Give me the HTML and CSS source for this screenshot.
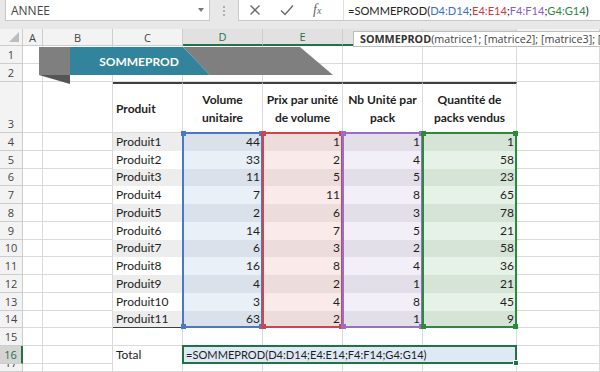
FILE: index.html
```html
<!DOCTYPE html>
<html lang="fr">
<head>
    <meta charset="UTF-8">
    <title>SOMMEPROD</title>
    <link rel="stylesheet" href="styles.css">
</head>
<body>
    <div class="formula-bar">
        <div class="name-box"><span>ANNEE</span><span class="caret"></span></div>
        <div class="grip"><i></i><i></i><i></i></div>
        <div class="fx-area">
            <div class="fx-buttons">
                <svg width="12" height="12" viewBox="0 0 12 12"><path d="M1.5 1.5l9 9M10.5 1.5l-9 9"/></svg>
                <svg width="14" height="12" viewBox="0 0 14 12"><path d="M1 6.5l4 4L13 1.5"/></svg>
                <span class="fx">f<small>x</small></span>
            </div>
            <div class="formula">=SOMMEPROD(<span class="ref-d">D4:D14</span>;<span class="ref-e">E4:E14</span>;<span class="ref-f">F4:F14</span>;<span class="ref-g">G4:G14</span>)</div>
        </div>
    </div>

    <div class="sheet">
        <div class="row">
            <div class="h corner"></div>
            <div class="h">A</div>
            <div class="h">B</div>
            <div class="h">C</div>
            <div class="h sel">D</div>
            <div class="h sel">E</div>
            <div class="h sel">F</div>
            <div class="h sel">G</div>
            <div class="h">H</div>
        </div>
        <div class="row">
            <div class="h rh">1</div>
            <div></div><div></div><div></div><div></div><div></div><div></div><div></div><div></div>
        </div>
        <div class="row">
            <div class="h rh">2</div>
            <div></div><div></div><div></div><div></div><div></div><div></div><div></div><div></div>
        </div>
        <div class="row">
            <div class="h rh">3</div>
            <div></div><div></div>
            <div class="th left">Produit</div>
            <div class="th">Volume<br>unitaire</div>
            <div class="th">Prix par unité<br>de volume</div>
            <div class="th">Nb Unité par<br>pack</div>
            <div class="th">Quantité de<br>packs vendus</div>
            <div></div>
        </div>

        <div class="row band">
            <div class="h rh">4</div><div></div><div></div>
            <div class="cp">Produit1</div>
            <div class="d num">44</div><div class="e num">1</div><div class="f num">1</div><div class="g num">1</div><div></div>
        </div>
        <div class="row">
            <div class="h rh">5</div><div></div><div></div>
            <div class="cp">Produit2</div>
            <div class="d num">33</div><div class="e num">2</div><div class="f num">4</div><div class="g num">58</div><div></div>
        </div>
        <div class="row band">
            <div class="h rh">6</div><div></div><div></div>
            <div class="cp">Produit3</div>
            <div class="d num">11</div><div class="e num">5</div><div class="f num">5</div><div class="g num">23</div><div></div>
        </div>
        <div class="row">
            <div class="h rh">7</div><div></div><div></div>
            <div class="cp">Produit4</div>
            <div class="d num">7</div><div class="e num">11</div><div class="f num">8</div><div class="g num">65</div><div></div>
        </div>
        <div class="row band">
            <div class="h rh">8</div><div></div><div></div>
            <div class="cp">Produit5</div>
            <div class="d num">2</div><div class="e num">6</div><div class="f num">3</div><div class="g num">78</div><div></div>
        </div>
        <div class="row">
            <div class="h rh">9</div><div></div><div></div>
            <div class="cp">Produit6</div>
            <div class="d num">14</div><div class="e num">7</div><div class="f num">5</div><div class="g num">21</div><div></div>
        </div>
        <div class="row band">
            <div class="h rh">10</div><div></div><div></div>
            <div class="cp">Produit7</div>
            <div class="d num">6</div><div class="e num">3</div><div class="f num">2</div><div class="g num">58</div><div></div>
        </div>
        <div class="row">
            <div class="h rh">11</div><div></div><div></div>
            <div class="cp">Produit8</div>
            <div class="d num">16</div><div class="e num">8</div><div class="f num">4</div><div class="g num">36</div><div></div>
        </div>
        <div class="row band">
            <div class="h rh">12</div><div></div><div></div>
            <div class="cp">Produit9</div>
            <div class="d num">4</div><div class="e num">2</div><div class="f num">1</div><div class="g num">21</div><div></div>
        </div>
        <div class="row">
            <div class="h rh">13</div><div></div><div></div>
            <div class="cp">Produit10</div>
            <div class="d num">3</div><div class="e num">4</div><div class="f num">8</div><div class="g num">45</div><div></div>
        </div>
        <div class="row band">
            <div class="h rh">14</div><div></div><div></div>
            <div class="cp last">Produit11</div>
            <div class="d num">63</div><div class="e num">2</div><div class="f num">1</div><div class="g num">9</div><div></div>
        </div>

        <div class="row">
            <div class="h rh">15</div>
            <div></div><div></div><div></div><div></div><div></div><div></div><div></div><div></div>
        </div>
        <div class="row">
            <div class="h rh sel-row">16</div><div></div><div></div>
            <div class="cp">Total</div>
            <div class="merged">=SOMMEPROD(D4:D14;E4:E14;F4:F14;G4:G14)</div>
            <div></div>
        </div>
        <div class="row">
            <div class="h rh">17</div>
            <div></div><div></div><div></div><div></div><div></div><div></div><div></div><div></div>
        </div>

        <!-- bandeau titre -->
        <svg class="banner" width="320" height="40" viewBox="0 0 320 40">
            <polygon points="16,1 47,1 47,29 16,29" fill="#7f7f7f"/>
            <polygon points="16,29 47,29 47,38" fill="#555555"/>
            <polygon points="160,1 277,1 310,29 187,29" fill="#7f7f7f"/>
            <polygon points="47,1 160,1 187,29 47,29" fill="#31849b"/>
            <text x="116" y="19.5" text-anchor="middle">SOMMEPROD</text>
        </svg>

        <!-- plages de la formule -->
        <div class="range range-d"><i class="tl"></i><i class="tr"></i><i class="bl"></i><i class="br"></i></div>
        <div class="range range-e"><i class="tl"></i><i class="tr"></i><i class="bl"></i><i class="br"></i></div>
        <div class="range range-f"><i class="tl"></i><i class="tr"></i><i class="bl"></i><i class="br"></i></div>
        <div class="range range-g"><i class="tl"></i><i class="tr"></i><i class="bl"></i><i class="br"></i></div>
        <div class="selection"><i></i></div>

        <div class="tooltip"><b>SOMMEPROD</b>(matrice1; [matrice2]; [matrice3]; [matrice4]; ...)</div>
    </div>
</body>
</html>
```

FILE: styles.css
```css
* {
    box-sizing: border-box;
}
body {
    margin: 0;
    width: 600px;
    height: 372px;
    overflow: hidden;
    background: #fff;
    font-family: "Open Sans", sans-serif;
}

/* barre de formule */
.formula-bar {
    display: flex;
    height: 29px;
    padding-bottom: 8px;
    background: #e8e8e8;
    overflow: hidden;
}
.name-box {
    flex: none;
    width: 205px;
    margin-left: 5px;
    background: #fff;
    border: 1px solid #c8c8c8;
    border-top: none;
    display: flex;
    align-items: center;
    justify-content: space-between;
    padding: 0 5px 0 5px;
    font-size: 12px;
    color: #444;
}
.caret {
    border-left: 3.5px solid transparent;
    border-right: 3.5px solid transparent;
    border-top: 4px solid #777;
}
.grip {
    flex: none;
    width: 28px;
    display: flex;
    flex-direction: column;
    align-items: center;
    justify-content: center;
    gap: 2px;
}
.grip i {
    width: 2px;
    height: 2px;
    background: #b0b0b0;
}
.fx-area {
    flex: 1;
    display: flex;
    min-width: 0;
    background: #fff;
    border-left: 1px solid #c8c8c8;
    border-bottom: 1px solid #c8c8c8;
}
.fx-buttons {
    flex: none;
    width: 105px;
    display: flex;
    align-items: center;
    gap: 19px;
    padding-left: 10px;
    border-right: 1px solid #e0e0e0;
}
.fx-buttons svg path {
    fill: none;
    stroke: #666;
    stroke-width: 1.3;
}
.fx {
    font-family: "Liberation Serif", serif;
    font-style: italic;
    font-size: 14px;
    color: #666;
}
.fx small {
    font-size: 10px;
}
.formula {
    display: flex;
    align-items: center;
    padding-left: 4px;
    font-family: Lato, "Liberation Sans", sans-serif;
    font-size: 11.1px;
    color: #222;
    white-space: nowrap;
}
.ref-d { color: #3a6fc4; }
.ref-e { color: #c8383f; }
.ref-f { color: #8c5cc4; }
.ref-g { color: #2a8a3c; }

/* feuille */
.sheet {
    position: relative;
    display: grid;
    grid-template-columns: 23px 20px 70px 70px 80px 80px 80px 94px 1fr;
    grid-template-rows: 17px 18px 18px 51px repeat(13, 17.75px) 1fr;
    height: 343px;
    font-family: Lato, "Liberation Sans", sans-serif;
    font-size: 12px;
    color: #1e1e1e;
}
.row {
    display: contents;
}
.row > div {
    display: flex;
    align-items: center;
    padding: 0 2px 0 3px;
    border-right: 1px solid #dadada;
    border-bottom: 1px solid #dadada;
    white-space: nowrap;
    overflow: hidden;
}
.row > .h {
    justify-content: center;
    padding: 0;
    background: #f3f3f3;
    border-color: #cdcdcd;
    font-family: "Open Sans", sans-serif;
    font-size: 11px;
    color: #444;
}
.row > .rh {
    align-items: flex-end;
    padding-bottom: 1px;
}
.row > .corner {
    justify-content: flex-end;
    align-items: flex-end;
    padding: 0 3px 3px 0;
}
.corner::after {
    content: "";
    border-left: 10px solid transparent;
    border-bottom: 10px solid #bdbdbd;
}
.row > .sel {
    background: #e1e1e1;
    color: #217346;
    border-bottom: 2px solid #217346;
}
.row > .sel-row {
    background: #d4d4d4;
    color: #217346;
    border-right: 2px solid #217346;
}

/* en-tetes du tableau */
.row > .th {
    justify-content: center;
    text-align: center;
    font-weight: 700;
    line-height: 18px;
    padding: 2px 0 0;
    border-top: 2px solid #3f3f3f;
}
.row > .th.left {
    justify-content: flex-start;
    padding-left: 3px;
}

/* donnees */
.row > .num {
    justify-content: flex-end;
}
.row > .cp,
.row > .d,
.row > .e,
.row > .f,
.row > .g {
    border-color: transparent;
}
.band .cp { background: #ededed; }
.row > .last { border-bottom: 1px solid #3f3f3f; }
.d { background: #eaf0f8; }
.band .d { background: #dbe1ea; }
.e { background: #fbeaea; }
.band .e { background: #ecdcdc; }
.f { background: #f2eff9; }
.band .f { background: #e2dfe8; }
.g { background: #e6f2e7; }
.band .g { background: #d6e3d7; }

.row > .merged {
    grid-column: span 4;
    background: #dfe9f5;
    padding-left: 3px;
    font-size: 11.1px;
}

/* bandeau */
.banner {
    position: absolute;
    grid-column: 2 / 10;
    grid-row: 2 / 5;
    top: 0;
    left: 0;
    overflow: visible;
}
.banner text {
    fill: #fff;
    font-family: Lato, sans-serif;
    font-weight: 700;
    font-size: 12px;
}

/* plages colorees */
.range {
    position: absolute;
    grid-row: 5 / 16;
    top: -1px;
    left: -1px;
    right: 0;
    bottom: 0;
    border: 2px solid;
}
.range-d { grid-column: 5 / 6; color: #4a78c8; }
.range-e { grid-column: 6 / 7; color: #d0454c; }
.range-f { grid-column: 7 / 8; color: #9a6ccc; }
.range-g { grid-column: 8 / 9; color: #2a8a3c; }
.range i {
    position: absolute;
    width: 5px;
    height: 5px;
    background: currentColor;
}
.range .tl { top: -3px; left: -3px; }
.range .tr { top: -3px; right: -3px; }
.range .bl { bottom: -3px; left: -3px; }
.range .br { bottom: -3px; right: -3px; }

.selection {
    position: absolute;
    grid-column: 5 / 9;
    grid-row: 17 / 18;
    top: -1px;
    left: -1px;
    right: 0;
    bottom: 0;
    border: 2px solid #217346;
}
.selection i {
    position: absolute;
    right: -4px;
    bottom: -4px;
    width: 6px;
    height: 6px;
    background: #217346;
    border: 1px solid #fff;
}

/* info-bulle */
.tooltip {
    position: absolute;
    grid-column: 7 / 10;
    grid-row: 1 / 2;
    top: 2px;
    left: 10px;
    height: 16px;
    width: 280px;
    padding: 0 6px;
    background: #fff;
    border: 1px solid #bdbdbd;
    font-family: "Open Sans", sans-serif;
    font-size: 10.75px;
    line-height: 14px;
    color: #444;
    white-space: nowrap;
    overflow: hidden;
}
.tooltip b {
    color: #333;
}
```
